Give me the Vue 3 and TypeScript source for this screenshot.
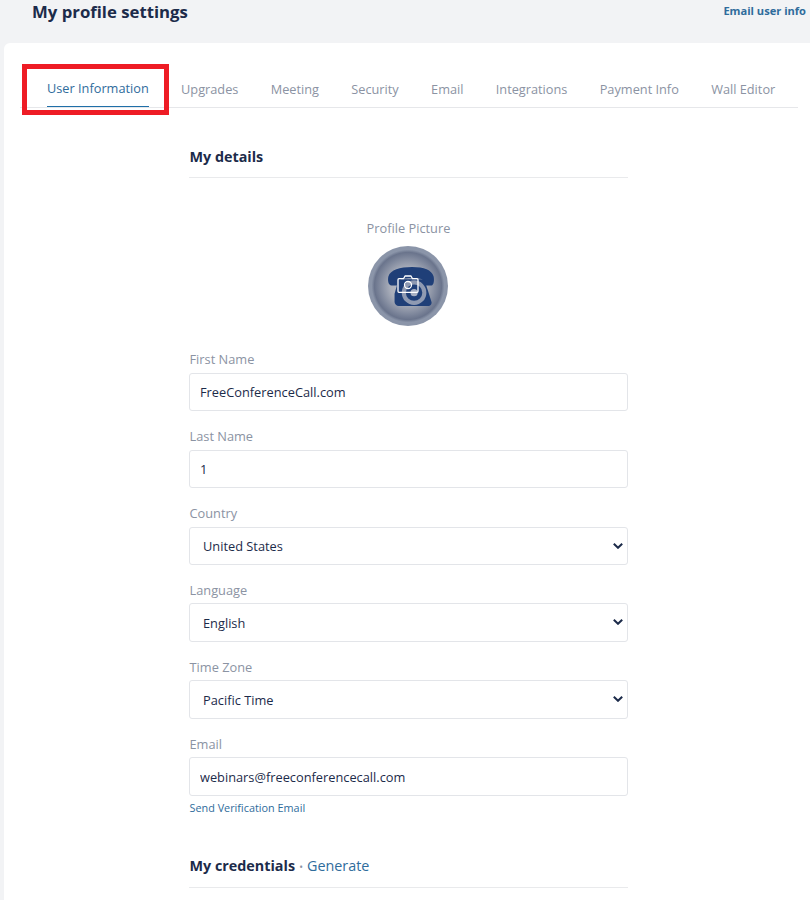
<script setup lang="ts">
const tabs: string[] = ['Upgrades', 'Meeting', 'Security', 'Email', 'Integrations', 'Payment Info', 'Wall Editor']
const inputsTop = [
  { label: 'First Name', value: 'FreeConferenceCall.com' },
  { label: 'Last Name', value: '1' },
]
const selects = [
  { label: 'Country', value: 'United States', tall: false },
  { label: 'Language', value: 'English', tall: false },
  { label: 'Time Zone', value: 'Pacific Time', tall: true },
]
</script>

<template>
  <div class="page">
    <header class="top">
      <h1 class="title">My profile settings</h1>
      <a class="email-info">Email user info</a>
    </header>
    <main class="card">
      <nav class="tabs">
        <span class="tab active">User Information</span>
        <span v-for="t in tabs" :key="t" class="tab">{{ t }}</span>
        <div class="highlight"></div>
      </nav>
      <section class="form">
        <h2 class="section first">My details</h2>
        <div class="picture">
          <div class="pic-label">Profile Picture</div>
          <div class="avatar">
            <svg class="phone" viewBox="0 0 46 39" width="48" height="40">
              <path fill="#1f3f78" d="M1 10C3 4 12 1 24 1s19 3 21 9c1 4 0 9-2 9h-6c-2 0-3-3-3-6-3-1-6-1-10-1s-8 0-11 1c0 3-1 6-3 6H4C1 19 0 14 1 10z"/>
              <path fill="#1f3f78" d="M11 13h25l7 22c.5 2-1 4-3 4H11c-2 0-4-2-4-4v-8z"/>
              <circle cx="26" cy="26" r="10" fill="none" stroke="#8f9ab2" stroke-width="4"/>
              <circle cx="26" cy="26" r="3.500" fill="#a9b1c3"/>
            </svg>
            <svg class="camera" viewBox="0 0 22 18" width="22" height="18" fill="none" stroke="#fff" stroke-width="1.300" stroke-linejoin="round">
              <path d="M2 3.700h4.500L8 1h6l1.500 2.700H20c.6 0 1 .4 1 1v11.600c0 .6-.4 1-1 1H2c-.6 0-1-.4-1-1V4.700c0-.6.400-1 1-1z"/>
              <circle cx="11" cy="10" r="3.500"/>
            </svg>
          </div>
        </div>
        <div v-for="f in inputsTop" :key="f.label" class="field">
          <label class="label">{{ f.label }}</label>
          <input class="control input" :value="f.value" />
        </div>
        <div v-for="f in selects" :key="f.label" class="field" :class="{ tall: f.tall }">
          <label class="label">{{ f.label }}</label>
          <div class="select-wrap">
            <select class="control select">
              <option>{{ f.value }}</option>
            </select>
            <svg class="chevron" viewBox="0 0 10 6" width="10" height="6" fill="none" stroke="#1c2b4a" stroke-width="2">
              <path d="M.8.800 5 4.800 9.200.8"/>
            </svg>
          </div>
        </div>
        <div class="field tall email">
          <label class="label">Email</label>
          <input class="control input" value="webinars@freeconferencecall.com" />
          <a class="verify">Send Verification Email</a>
        </div>
        <h2 class="section creds">My credentials<span class="dot"> • </span><a class="generate">Generate</a></h2>
      </section>
    </main>
  </div>
</template>

<style>
html, body { margin: 0; background: #f2f3f5; overflow: hidden; }
</style>

<style scoped>
.page {
  width: 810px;
  height: 900px;
  overflow: hidden;
  font-family: "Open Sans", sans-serif;
  background: #f2f3f5;
  color: #1c2b4a;
}
.top {
  height: 43px;
  display: flex;
  justify-content: space-between;
  padding: 0 4px 0 32px;
}
.title {
  margin: 1px 0 0;
  font-size: 16.75px;
  line-height: 22px;
  font-weight: 700;
  color: #1c2b4a;
}
.email-info {
  margin-top: 3px;
  font-size: 11.1px;
  line-height: 16px;
  font-weight: 700;
  color: #2f6c9c;
}
.card {
  margin-left: 4px;
  height: 857px;
  background: #fff;
  border-top-left-radius: 6px;
  padding: 21px 12px 0 16px;
  box-sizing: border-box;
}
.tabs {
  position: relative;
  display: flex;
  gap: 32.3px;
  height: 44px;
  box-sizing: border-box;
  border-bottom: 1px solid #e6e7ea;
  padding-left: 27px;
}
.tab {
  font-size: 12.75px;
  line-height: 18px;
  padding-top: 16px;
  color: #8b93a3;
}
.tab.active {
  color: #2f6c9c;
  padding-top: 15px;
  height: 27px;
  border-bottom: 1px solid #1f6fa8;
}
.highlight {
  position: absolute;
  left: 2px;
  top: 0;
  width: 147px;
  height: 51px;
  box-sizing: border-box;
  border: 5px solid #ee1c25;
}
.form {
  width: 439px;
  margin-left: 169px;
}
.section {
  margin: 0;
  font-size: 14.35px;
  line-height: 20px;
  font-weight: 700;
  color: #1c2b4a;
  border-bottom: 1px solid #e9eaec;
  padding-left: 0.5px;
}
.section.first {
  margin-top: 39px;
  padding-bottom: 10px;
}
.picture {
  margin-top: 41px;
  text-align: center;
}
.pic-label {
  font-size: 12.8px;
  line-height: 18px;
  color: #8b93a3;
}
.avatar {
  position: relative;
  width: 80px;
  height: 80px;
  margin: 9px 0 0 179px;
  border-radius: 50%;
  background: radial-gradient(closest-side, #bfc2ca 0%, #a9aeba 45%, #7d869b 72%, #6a748c 84%, #8b95a9 91%, #8b95a9 100%);
}
.phone {
  position: absolute;
  left: 19px;
  top: 20px;
  filter: blur(0.6px);
}
.camera {
  position: absolute;
  left: 29px;
  top: 29px;
}
.field { margin-top: 15.95px; }
.picture + .field { margin-top: 24.3px; }
.label {
  display: block;
  font-size: 12.8px;
  line-height: 18px;
  color: #8b93a3;
  margin-bottom: 4.7px;
  padding-left: 0.5px;
}
.control {
  display: block;
  width: 100%;
  height: 38.2px;
  box-sizing: border-box;
  border: 1px solid #e3e5e9;
  border-radius: 3px;
  background: #fff;
  font-family: "Open Sans", sans-serif;
  font-size: 12.8px;
  color: #1c2b4a;
  outline: none;
}
.tall .control { height: 39px; }
.email .label { margin-bottom: 4px; }
.input { padding: 0 10px; }
.select-wrap { position: relative; }
.select {
  appearance: none;
  padding: 0 13px;
}
.chevron {
  position: absolute;
  right: 5px;
  top: 16px;
  pointer-events: none;
}
.verify {
  display: block;
  margin-top: 4.25px;
  padding-left: 0.5px;
  font-size: 10.85px;
  line-height: 16px;
  color: #2f6c9c;
}
.section.creds {
  margin-top: 40px;
  padding-bottom: 10px;
}
.dot {
  color: #8b93a3;
  font-weight: 400;
  font-size: 10px;
  padding: 0 1.5px;
}
.generate {
  font-weight: 400;
  color: #2f6c9c;
}
</style>
